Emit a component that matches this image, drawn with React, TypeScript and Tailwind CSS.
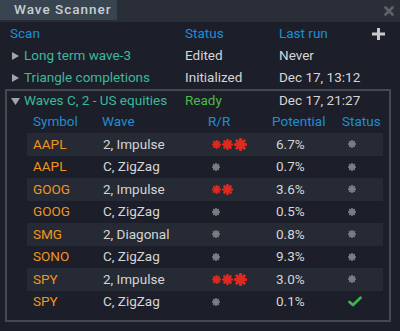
import React from "react";

const Star = ({ size, color }: { size: number; color: string }) => (
  <svg width={size} height={size} viewBox="0 0 12 12" className="shrink-0">
    <g stroke={color} strokeWidth={2.8} strokeLinecap="round">
      <line x1="6" y1="1.2" x2="6" y2="10.8" />
      <line x1="1.2" y1="6" x2="10.8" y2="6" />
      <line x1="2.6" y1="2.6" x2="9.4" y2="9.4" />
      <line x1="9.4" y1="2.6" x2="2.6" y2="9.4" />
    </g>
    <circle cx="6" cy="6" r="3.2" fill={color} />
  </svg>
);

const Gray = () => <Star size={8} color="#7a7d82" />;

const RR = ({ n }: { n: number }) => {
  if (n === 0) return <Gray />;
  const sizes = [9, 11, 13].slice(0, n);
  return (
    <div className="flex items-center gap-[1px]">
      {sizes.map((s, i) => (
        <Star key={i} size={s} color="#e0291f" />
      ))}
    </div>
  );
};

const Check = () => (
  <svg width="14" height="11" viewBox="0 0 14 11">
    <path d="M1.5 6 L5 9 L12.5 1.8" fill="none" stroke="#3fb24a" strokeWidth="2.8" strokeLinecap="round" strokeLinejoin="round" />
  </svg>
);

const TriRight = () => (
  <svg width="7" height="8" viewBox="0 0 7 8" className="shrink-0">
    <path d="M0 0 L7 4 L0 8 Z" fill="#a3a5a9" />
  </svg>
);
const TriDown = () => (
  <svg width="9" height="7" viewBox="0 0 9 7" className="shrink-0">
    <path d="M0 0 L9 0 L4.5 7 Z" fill="#a3a5a9" />
  </svg>
);

const rows = [
  { sym: "AAPL", wave: "2, Impulse", rr: 3, pot: "6.7%", ok: false },
  { sym: "AAPL", wave: "C, ZigZag", rr: 0, pot: "0.7%", ok: false },
  { sym: "GOOG", wave: "2, Impulse", rr: 2, pot: "3.6%", ok: false },
  { sym: "GOOG", wave: "C, ZigZag", rr: 0, pot: "0.5%", ok: false },
  { sym: "SMG", wave: "2, Diagonal", rr: 0, pot: "0.8%", ok: false },
  { sym: "SONO", wave: "C, ZigZag", rr: 0, pot: "9.3%", ok: false },
  { sym: "SPY", wave: "2, Impulse", rr: 3, pot: "3.0%", ok: false },
  { sym: "SPY", wave: "C, ZigZag", rr: 0, pot: "0.1%", ok: true },
];

export default function App() {
  return (
    <div
      className="w-[400px] h-[331px] overflow-hidden bg-[#1c1f29] text-[13.5px] leading-none whitespace-nowrap"
      style={{ fontFamily: "Roboto, 'Liberation Sans', sans-serif" }}
    >
      {/* title bar */}
      <div className="h-[22px] bg-[#2a2e38] flex items-stretch">
        <div className="w-[117px] shrink-0 h-[20px] bg-[#384550] flex items-center pl-[14px] text-[13.5px] font-medium tracking-[1px] text-[#c9cdd1]">
          Wave Scanner
        </div>
        <div className="flex-1" />
        <div className="w-[22px] flex items-center justify-center">
          <svg width="10" height="10" viewBox="0 0 10 10">
            <g stroke="#5f6268" strokeWidth="2.6" strokeLinecap="round">
              <line x1="1.5" y1="1.5" x2="8.5" y2="8.5" />
              <line x1="8.5" y1="1.5" x2="1.5" y2="8.5" />
            </g>
          </svg>
        </div>
      </div>

      {/* top header */}
      <div className="h-[23px] flex items-center text-[#1e8ed6]">
        <div className="w-[185px] shrink-0 pl-[10px]">Scan</div>
        <div className="w-[94px] shrink-0">Status</div>
        <div className="flex-1">Last run</div>
        <div className="w-[28px] shrink-0 flex items-center">
          <svg width="13" height="12" viewBox="0 0 13 12">
            <g fill="#c8c9cb">
              <rect x="5" y="0" width="3" height="12" />
              <rect x="0" y="4.5" width="13" height="3" />
            </g>
          </svg>
        </div>
      </div>

      <div className="h-[22px] flex items-center">
        <div className="w-[185px] shrink-0 flex items-center pl-[12px] gap-[5px] text-[#3db89c]">
          <TriRight />
          <span>Long term wave-3</span>
        </div>
        <div className="w-[94px] shrink-0 text-[#d4d5d7]">Edited</div>
        <div className="text-[#d4d5d7]">Never</div>
      </div>
      <div className="h-[22px] flex items-center">
        <div className="w-[185px] shrink-0 flex items-center pl-[12px] gap-[5px] text-[#3db89c]">
          <TriRight />
          <span>Triangle completions</span>
        </div>
        <div className="w-[94px] shrink-0 text-[#d4d5d7]">Initialized</div>
        <div className="text-[#d4d5d7]">Dec 17, 13:12</div>
      </div>

      {/* group */}
      <div className="ml-[5px] w-[386px] h-[233px] border-2 border-[#45484f] flex flex-col">
        <div className="h-[20px] flex items-center">
          <div className="w-[178px] shrink-0 flex items-center pl-[4px] gap-[4px] text-[#3db89c]">
            <TriDown />
            <span>Waves C, 2 - US equities</span>
          </div>
          <div className="w-[94px] shrink-0 text-[#4cb84a]">Ready</div>
          <div className="text-[#d4d5d7]">Dec 17, 21:27</div>
        </div>

        <div className="ml-[20px] w-[356px]">
          <div className="h-[22px] flex items-center text-[#1e8ed6]">
            <div className="w-[75px] shrink-0 pl-[6px]">Symbol</div>
            <div className="w-[106px] shrink-0">Wave</div>
            <div className="w-[64px] shrink-0">R/R</div>
            <div className="w-[70px] shrink-0">Potential</div>
            <div>Status</div>
          </div>
          {rows.map((r, i) => (
            <div
              key={i}
              className={`h-[22.5px] flex items-center ${i % 2 === 0 ? "bg-[#262a34]" : ""}`}
            >
              <div className="w-[75px] shrink-0 pl-[6px] text-[#f0951d]">{r.sym}</div>
              <div className="w-[106px] shrink-0 pl-[1px] text-[#d4d5d7]">{r.wave}</div>
              <div className="w-[64px] shrink-0 pl-[4px] flex items-center">
                <RR n={r.rr} />
              </div>
              <div className="w-[70px] shrink-0 pl-[4px] text-[#d4d5d7]">{r.pot}</div>
              <div className="pl-[6px] flex items-center">
                {r.ok ? <Check /> : <Gray />}
              </div>
            </div>
          ))}
        </div>
      </div>
    </div>
  );
}
